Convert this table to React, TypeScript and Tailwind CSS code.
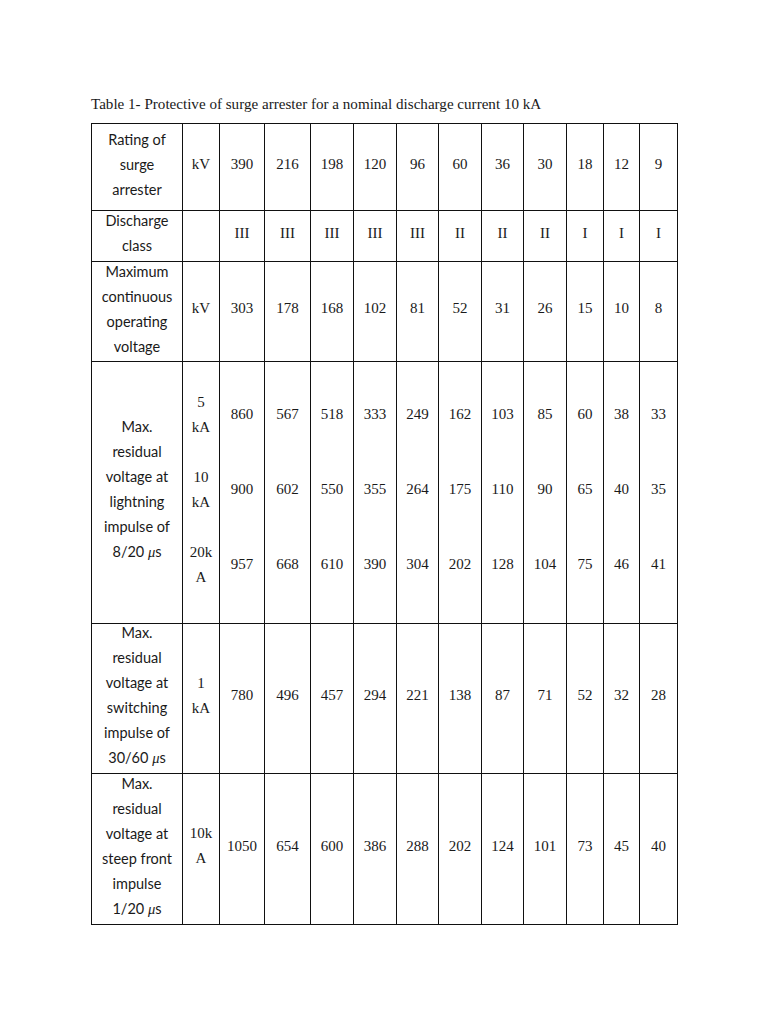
const cols = 'grid-cols-[90px_36px_44px_45px_42px_42px_41px_42px_41px_42px_36px_35px_37px]'

const Mu = () => <span className="font-['Liberation_Serif',serif] italic">μ</span>

type Row = {
  h: string
  label: React.ReactNode
  unit: React.ReactNode | React.ReactNode[]
  values: (string | string[])[]
}

const rows: Row[] = [
  {
    h: 'h-[86px]',
    label: <>Rating of<br />surge<br />arrester</>,
    unit: 'kV',
    values: ['390', '216', '198', '120', '96', '60', '36', '30', '18', '12', '9'],
  },
  {
    h: 'h-[50px]',
    label: <>Discharge<br />class</>,
    unit: '',
    values: ['III', 'III', 'III', 'III', 'III', 'II', 'II', 'II', 'I', 'I', 'I'],
  },
  {
    h: 'h-[99px]',
    label: <>Maximum<br />continuous<br />operating<br />voltage</>,
    unit: 'kV',
    values: ['303', '178', '168', '102', '81', '52', '31', '26', '15', '10', '8'],
  },
  {
    h: 'h-[261px]',
    label: <>Max.<br />residual<br />voltage at<br />lightning<br />impulse of<br />8/20 <Mu />s</>,
    unit: [<>5<br />kA</>, <>10<br />kA</>, <>20k<br />A</>],
    values: [
      ['860', '900', '957'],
      ['567', '602', '668'],
      ['518', '550', '610'],
      ['333', '355', '390'],
      ['249', '264', '304'],
      ['162', '175', '202'],
      ['103', '110', '128'],
      ['85', '90', '104'],
      ['60', '65', '75'],
      ['38', '40', '46'],
      ['33', '35', '41'],
    ],
  },
  {
    h: 'h-[149px]',
    label: <>Max.<br />residual<br />voltage at<br />switching<br />impulse of<br />30/60 <Mu />s</>,
    unit: <>1<br />kA</>,
    values: ['780', '496', '457', '294', '221', '138', '87', '71', '52', '32', '28'],
  },
  {
    h: 'h-[150px]',
    label: <>Max.<br />residual<br />voltage at<br />steep front<br />impulse<br />1/20 <Mu />s</>,
    unit: <>10k<br />A</>,
    values: ['1050', '654', '600', '386', '288', '202', '124', '101', '73', '45', '40'],
  },
]

function Stack({ items }: { items: React.ReactNode[] }) {
  return (
    <div className="flex flex-col gap-[25px]">
      {items.map((it, i) => (
        <div key={i} className="h-[50px] flex items-center justify-center">
          <div>{it}</div>
        </div>
      ))}
    </div>
  )
}

const cell = 'bg-white flex items-center justify-center text-center pb-[6px]'

export default function App() {
  return (
    <div className="min-h-[1024px] bg-white text-[#1a1a1a] pt-[92px] pl-[91px] font-['Liberation_Serif',serif] text-[15px] leading-[25px]">
      <p className="mb-[6px] whitespace-nowrap text-[15.1px]">
        Table 1- Protective of surge arrester for a nominal discharge current 10 kA
      </p>

      <div className={`inline-grid ${cols} gap-px bg-[#111] p-px`}>
        {rows.map((r, ri) => (
          <div key={ri} className="contents">
            <div className={`${cell} ${r.h} font-['Lato','Noto_Sans',sans-serif] text-[14.5px]`}>
              <div>{r.label}</div>
            </div>
            <div className={`${cell} ${r.h}`}>
              {Array.isArray(r.unit) ? <Stack items={r.unit} /> : <div>{r.unit}</div>}
            </div>
            {r.values.map((v, vi) => (
              <div key={vi} className={`${cell} ${r.h}`}>
                {Array.isArray(v) ? <Stack items={v} /> : <div>{v}</div>}
              </div>
            ))}
          </div>
        ))}
      </div>
    </div>
  )
}
